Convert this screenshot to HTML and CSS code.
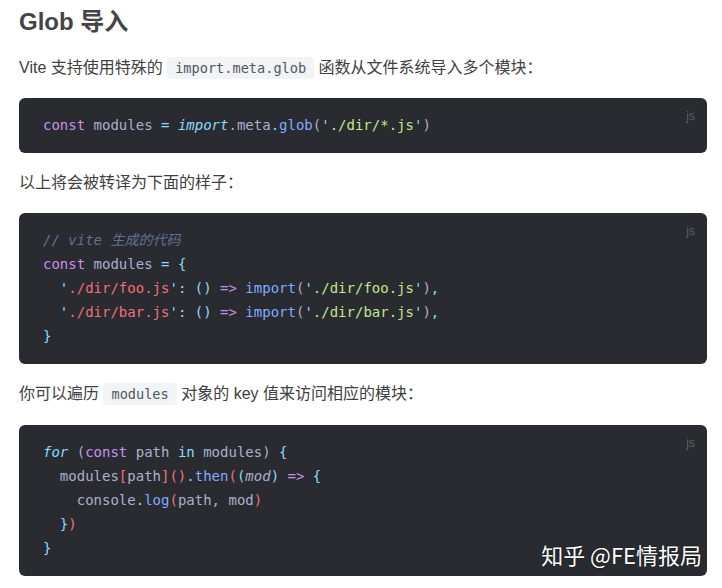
FILE: index.html
```html
<!DOCTYPE html>
<html lang="zh-CN">
<head>
<meta charset="utf-8">
<title>Glob 导入</title>
<link rel="stylesheet" href="styles.css">
</head>
<body>
<main class="doc">
  <h2 class="title">Glob 导入</h2>
  <p class="para">Vite 支持使用特殊的 <code class="inline">import.meta.glob</code> 函数从文件系统导入多个模块：</p>
  <div class="block"><span class="lang">js</span><pre class="code"><span class="kw">const</span> modules <span class="op">=</span> <span class="it op">import</span>.meta<span class="op">.</span><span class="fn">glob</span>(<span class="op">'</span><span class="str">./dir/*.js</span><span class="op">'</span>)</pre></div>
  <p class="para">以上将会被转译为下面的样子：</p>
  <div class="block"><span class="lang">js</span><pre class="code"><span class="cm">// vite 生成的代码</span>
<span class="kw">const</span> modules <span class="op">=</span> <span class="op">{</span>
  <span class="op">'</span><span class="key">./dir/foo.js</span><span class="op">'</span><span class="op">:</span> <span class="op">()</span> <span class="kw">=&gt;</span> <span class="fn">import</span>(<span class="op">'</span><span class="str">./dir/foo.js</span><span class="op">'</span>)<span class="op">,</span>
  <span class="op">'</span><span class="key">./dir/bar.js</span><span class="op">'</span><span class="op">:</span> <span class="op">()</span> <span class="kw">=&gt;</span> <span class="fn">import</span>(<span class="op">'</span><span class="str">./dir/bar.js</span><span class="op">'</span>)<span class="op">,</span>
<span class="op">}</span></pre></div>
  <p class="para">你可以遍历 <code class="inline">modules</code> 对象的 key 值来访问相应的模块：</p>
  <div class="block"><span class="lang">js</span><pre class="code"><span class="it op">for</span> (<span class="kw">const</span> path <span class="op">in</span> modules) <span class="op">{</span>
  modules<span class="key">[</span>path<span class="key">]()</span><span class="op">.</span><span class="fn">then</span><span class="key">(</span><span class="op">(</span><span class="it">mod</span><span class="op">)</span> <span class="kw">=&gt;</span> <span class="op">{</span>
    console<span class="op">.</span><span class="fn">log</span><span class="key">(</span>path, mod<span class="key">)</span>
  <span class="op">}</span><span class="key">)</span>
<span class="op">}</span></pre></div>
</main>
<div class="watermark">知乎 @FE情报局</div>
</body>
</html>
```
FILE: styles.css
```css
html, body {
  margin: 0;
  padding: 0;
  background: #ffffff;
}

body {
  font-family: "Liberation Sans", "Noto Sans CJK SC", sans-serif;
  color: #404040;
  width: 722px;
  height: 588px;
  overflow: hidden;
  position: relative;
}

.doc {
  padding: 6px 15px 0 19px;
}

.title {
  margin: 0 0 16px;
  font-size: 24px;
  line-height: 32px;
  font-weight: 700;
  color: #444444;
}

.para {
  margin: 0 0 16px;
  font-size: 16px;
  line-height: 28px;
}

.para:nth-of-type(3) {
  margin-bottom: 17px;
}

.inline {
  font-family: "DejaVu Sans Mono", monospace;
  font-size: 13.6px;
  background: #f2f3f5;
  color: #4f5763;
  padding: 3px 8px;
  border-radius: 4px;
}

.block {
  position: relative;
  background: #292b30;
  border-radius: 6px;
  margin: 0 0 16px;
}

.lang {
  position: absolute;
  top: 11px;
  right: 12px;
  font-family: "Liberation Sans", sans-serif;
  font-size: 12px;
  line-height: 14px;
  color: #5d6066;
}

.code {
  margin: 0;
  padding: 15px 24px 16px;
  font-family: "DejaVu Sans Mono", "Noto Sans CJK SC", monospace;
  font-size: 14px;
  line-height: 24px;
  color: #abb0cc;
  white-space: pre;
}

.kw { color: #c792ea; }
.op { color: #89ddff; }
.fn { color: #82aaff; }
.str { color: #c3e88d; }
.key { color: #f07178; }
.cm { color: #676e95; font-style: italic; }
.it { font-style: italic; }

.watermark {
  position: absolute;
  right: 20px;
  bottom: 18px;
  font-family: "Noto Sans CJK SC", sans-serif;
  font-size: 22px;
  line-height: 32px;
  color: #ffffff;
  text-shadow: 0 0 2px rgba(0, 0, 0, 0.6);
}
```
